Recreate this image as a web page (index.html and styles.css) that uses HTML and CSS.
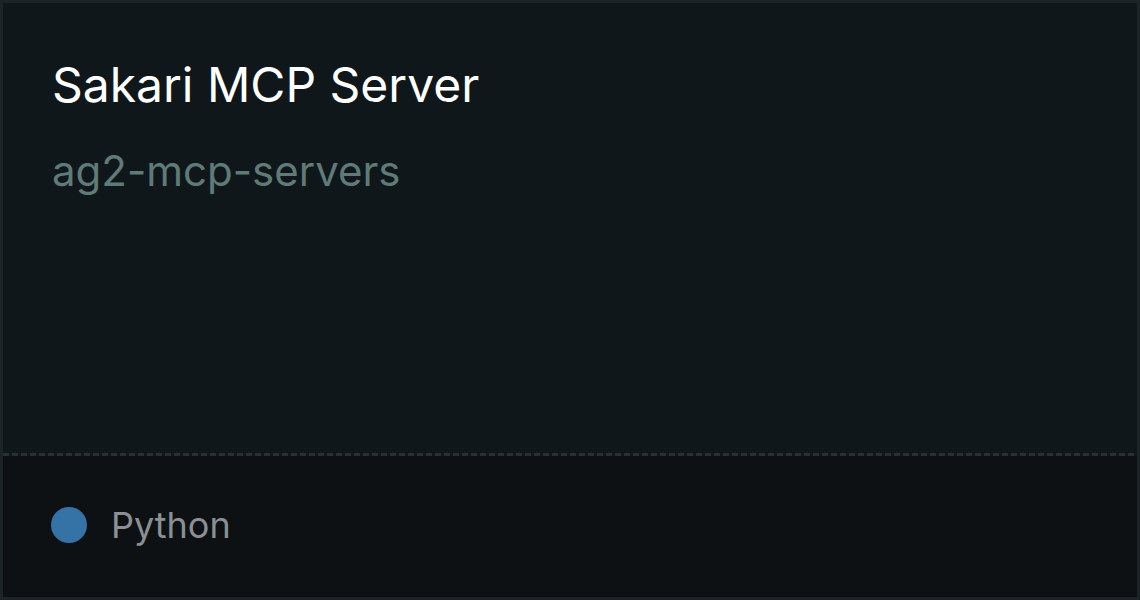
FILE: index.html
```html
<!DOCTYPE html>
<html>
<head>
<meta charset="utf-8">
<link rel="stylesheet" href="styles.css">
</head>
<body>
<div class="card">
  <div class="card-main">
    <h1 class="title">Sakari MCP Server</h1>
    <div class="repo">ag2-mcp-servers</div>
  </div>
  <div class="divider"></div>
  <div class="card-footer">
    <span class="lang-dot"></span>
    <span class="lang-name">Python</span>
  </div>
</div>
</body>
</html>
```
FILE: styles.css
```css
html, body {
  margin: 0;
  padding: 0;
  background: #0d1114;
}
.card {
  box-sizing: border-box;
  width: 1140px;
  height: 600px;
  border: 3px solid #1c2427;
  display: flex;
  flex-direction: column;
  font-family: Inter, "Noto Sans", sans-serif;
}
.card-main {
  background: #10171a;
  height: 450px;
  flex: none;
  padding: 53px 49px 0;
  box-sizing: border-box;
}
.title {
  margin: 0;
  font-size: 48px;
  font-weight: 400;
  line-height: 58px;
  color: #ffffff;
}
.repo {
  margin-top: 31px;
  font-size: 42px;
  line-height: 51px;
  color: #5f7b77;
}
.divider {
  height: 3px;
  flex: none;
  background: repeating-linear-gradient(90deg, #283033 0 6px, transparent 6px 9px);
  background-color: #10171a;
}
.card-footer {
  flex: 1;
  background: #0d1114;
  display: flex;
  align-items: center;
  padding: 0 48px 3px;
  gap: 24px;
}
.lang-dot {
  width: 36px;
  height: 36px;
  border-radius: 50%;
  background: #3572a5;
  flex: none;
}
.lang-name {
  font-size: 36px;
  color: #8b9094;
}
```
